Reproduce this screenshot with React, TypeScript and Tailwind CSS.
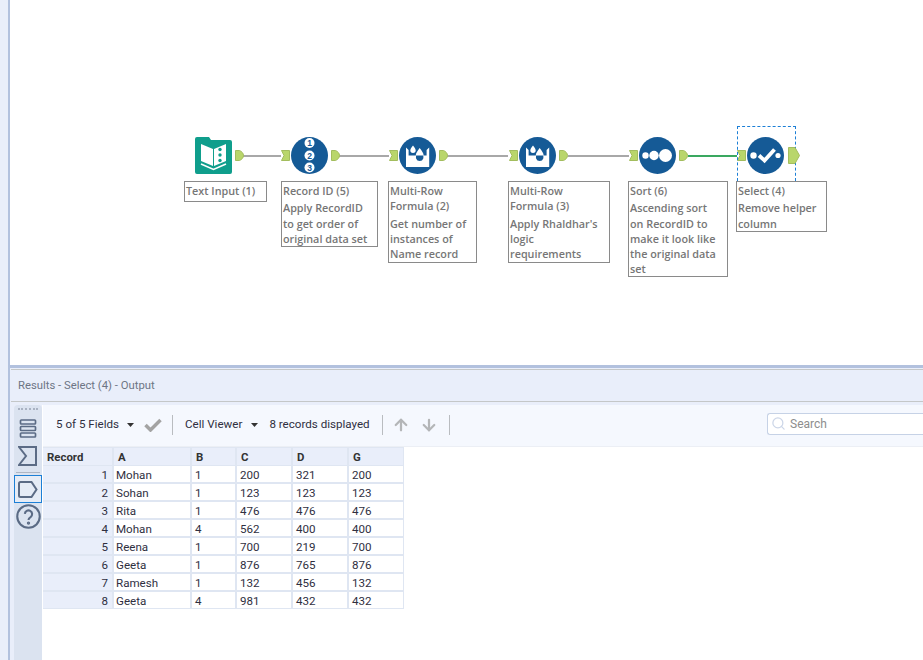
import { ArrowUp, ArrowDown, Search } from "lucide-react";

type NodeInfo = {
    x: number;
    labelX: number;
    labelW: number;
    labelH: number;
    title: string[];
    note: string[];
};

const nodes: NodeInfo[] = [
    { x: 195, labelX: 184, labelW: 83, labelH: 21, title: ["Text Input (1)"], note: [] },
    { x: 291, labelX: 281, labelW: 97, labelH: 66, title: ["Record ID (5)"], note: ["Apply RecordID", "to get order of", "original data set"] },
    { x: 399, labelX: 388, labelW: 89, labelH: 82, title: ["Multi-Row", "Formula (2)"], note: ["Get number of", "instances of", "Name record"] },
    { x: 519, labelX: 508, labelW: 102, labelH: 82, title: ["Multi-Row", "Formula (3)"], note: ["Apply Rhaldhar's", "logic", "requirements"] },
    { x: 639, labelX: 628, labelW: 100, labelH: 96, title: ["Sort (6)"], note: ["Ascending sort", "on RecordID to", "make it look like", "the original data", "set"] },
    { x: 747, labelX: 736, labelW: 91, labelH: 51, title: ["Select (4)"], note: ["Remove helper", "column"] },
];

const links = [
    { x: 243, w: 38, c: "bg-[#a8a8a8]" },
    { x: 339, w: 50, c: "bg-[#a8a8a8]" },
    { x: 447, w: 61, c: "bg-[#a8a8a8]" },
    { x: 568, w: 61, c: "bg-[#a8a8a8]" },
    { x: 688, w: 49, c: "bg-[#3aa860]" },
];

const rows = [
    ["1", "Mohan", "1", "200", "321", "200"],
    ["2", "Sohan", "1", "123", "123", "123"],
    ["3", "Rita", "1", "476", "476", "476"],
    ["4", "Mohan", "4", "562", "400", "400"],
    ["5", "Reena", "1", "700", "219", "700"],
    ["6", "Geeta", "1", "876", "765", "876"],
    ["7", "Ramesh", "1", "132", "456", "132"],
    ["8", "Geeta", "4", "981", "432", "432"],
];

const headers = ["Record", "A", "B", "C", "D", "G"];
const gridCols = "grid grid-cols-[69px_76px_43px_54px_54px_54px] gap-x-[2px]";

function InAnchor({ x }: { x: number }) {
    return (
        <svg className="absolute top-[150px]" style={{ left: x }} width="9" height="11" viewBox="0 0 9 11">
            <path d="M0.5 0.5H8.5V10.5H0.5L3 5.5Z" fill="#b9d66b" stroke="#a3bd5e" />
        </svg>
    );
}

function OutAnchor({ x }: { x: number }) {
    return (
        <svg className="absolute top-[150px]" style={{ left: x }} width="9" height="11" viewBox="0 0 9 11">
            <path d="M0.5 0.5H4.5C7 1.5 8.500 3.500 8.500 5.500S7 9.500 4.500 10.500H0.500Z" fill="#b9d66b" stroke="#a3bd5e" />
        </svg>
    );
}

function Caret({ className }: { className: string }) {
    return (
        <svg className={className} width="7" height="4" viewBox="0 0 7 4">
            <path d="M0 0H7L3.500 4Z" fill="#333" />
        </svg>
    );
}

function ToolIcon({ index }: { index: number }) {
    if (index === 0) {
        return (
            <svg width="37" height="37" viewBox="0 0 37 37">
                <path d="M0 2a2 2 0 0 1 2-2h12l2 3h19a2 2 0 0 1 2 2v30a2 2 0 0 1-2 2H2a2 2 0 0 1-2-2Z" fill="#0f9e8c" />
                <path d="M6 7l12 5v17L6 24Z" fill="#fff" />
                <path d="M19 12L31 7v17l-12 5Z" fill="#fff" />
                <path d="M6 27l12.500 5.500L31 27" fill="none" stroke="#fff" strokeWidth="1.600" />
                <circle cx="25" cy="12.500" r="1.700" fill="#0f9e8c" />
                <circle cx="25" cy="18" r="1.700" fill="#0f9e8c" />
                <circle cx="25" cy="23.500" r="1.700" fill="#0f9e8c" />
            </svg>
        );
    }
    return (
        <svg width="37" height="37" viewBox="0 0 37 37">
            <circle cx="18.5" cy="18.5" r="18.5" fill="#155a96" />
            {index === 1 && (
                <g fontFamily="'Liberation Sans', sans-serif" fontSize="8.500" fontWeight="700" textAnchor="middle" fill="#155a96">
                    <circle cx="18.5" cy="6" r="5" fill="#fff" />
                    <circle cx="18.5" cy="18.5" r="5" fill="#fff" />
                    <circle cx="18.5" cy="30.500" r="5" fill="#fff" />
                    <text x="18.5" y="9">1</text>
                    <text x="18.5" y="21.500">2</text>
                    <text x="18.5" y="33.500">3</text>
                </g>
            )}
            {(index === 2 || index === 3) && (
                <g>
                    <path d="M7 10.500l2.600 2.500v5.500h18V13l2.600-2.500V30H7Z" fill="#fff" />
                    <path d="M14 8.500c1.700 2.400 2.700 3.600 2.700 4.800a2.700 2.700 0 0 1-5.400 0c0-1.200 1-2.400 2.700-4.800Z" fill="#fff" />
                    <path d="M20.700 11c2.500 3.500 3.900 5.300 3.900 7.200a3.900 3.900 0 0 1-7.800 0c0-1.900 1.400-3.700 3.900-7.200Z" fill="#fff" />
                    <path d="M24.300 18.500c0 0.100 0.300 2.500 0 3a3.800 3.800 0 0 1-7.200 0c-0.300-0.500 0-2.900 0-3Z" fill="#155a96" />
                </g>
            )}
            {index === 4 && (
                <g fill="#fff">
                    <circle cx="6.500" cy="18.500" r="3.200" />
                    <circle cx="15" cy="18.500" r="4.700" />
                    <circle cx="26.500" cy="18.500" r="6.500" />
                </g>
            )}
            {index === 5 && (
                <g fill="#fff">
                    <circle cx="6.500" cy="18.500" r="3.200" />
                    <circle cx="31" cy="18.500" r="2.600" />
                    <path d="M12 18.500l5.500 5 10-11" fill="none" stroke="#fff" strokeWidth="3.800" />
                </g>
            )}
        </svg>
    );
}

function SideIcons() {
    return (
        <div className="w-[28px] shrink-0 bg-[#dbe3f0] flex flex-col items-center rounded-t-sm">
            <div className="mt-[3px] h-[2px] w-[20px] border-t-2 border-dotted border-[#a9b2c2]" />
            <svg className="mt-[9px]" width="18" height="19" viewBox="0 0 18 19" fill="none" stroke="#5b6b85" strokeWidth="1.700">
                <rect x="1.500" y="1" width="15" height="4" rx="0.800" />
                <rect x="1.500" y="7.500" width="15" height="4" rx="0.800" />
                <rect x="1.500" y="14" width="15" height="4" rx="0.800" />
            </svg>
            <svg className="mt-[8px]" width="20" height="20" viewBox="0 0 20 20" fill="none" stroke="#5b6b85" strokeWidth="2">
                <path d="M1 1H18V19H1L8 10Z" />
            </svg>
            <div className="mt-[6px] h-px w-[24px] bg-[#aeb6c4]" />
            <div className="mt-[2px] w-[28px] h-[28px] border border-[#1c7fd6] flex items-center justify-center bg-[#e6ecf6]">
                <svg width="20" height="17" viewBox="0 0 20 17" fill="none" stroke="#5b6b85" strokeWidth="2">
                    <path d="M2.500 1H13.500L18.500 8.500L13.500 16H2.500a1.500 1.500 0 0 1-1.500-1.500V2.500A1.500 1.500 0 0 1 2.500 1Z" />
                </svg>
            </div>
            <svg className="mt-[1px]" width="25" height="25" viewBox="0 0 24 24" fill="none" stroke="#5b6b85" strokeWidth="2">
                <circle cx="12" cy="12" r="10.800" />
                <path d="M8.500 9.500a3.500 3.500 0 1 1 5.500 3c-1.300 0.800-2 1.500-2 2.800" />
                <circle cx="12" cy="18.300" r="0.600" fill="#5b6b85" />
            </svg>
        </div>
    );
}

export default function App() {
    return (
        <div className="w-[923px] h-[660px] overflow-hidden flex bg-[#e9eefa] font-['Roboto',sans-serif] text-[11.600px] text-[#2f2f3f]">
            <div className="w-[8px] shrink-0 bg-[#e9eefa]" />
            <div className="w-[2px] shrink-0 bg-[#b2c1de]" />

            <div className="flex-1 min-w-0 flex flex-col">
                {/* workflow canvas, nodes sit on page coords so offset by the 10px strip */}
                <div className="relative h-[365px] shrink-0 bg-white">
                    <div className="absolute -left-[10px] top-0 w-[923px] h-[365px]">
                        {links.map((l) => (
                            <div key={l.x} className={`absolute top-[155px] h-[2px] ${l.c}`} style={{ left: l.x, width: l.w }} />
                        ))}
                        {nodes.map((n, i) => (
                            <div key={n.title[0] + i}>
                                {i > 0 && <InAnchor x={n.x - 10} />}
                                <div className="absolute top-[137px]" style={{ left: n.x }}>
                                    <ToolIcon index={i} />
                                </div>
                                {i < 5 && <OutAnchor x={n.x + 40} />}
                                <div
                                    className="absolute top-[181px] border border-[#8a8a8a] bg-white pl-[1px] font-['Open_Sans',sans-serif] font-semibold text-[10.800px] leading-[15.300px] text-[#767676] whitespace-nowrap"
                                    style={{ left: n.labelX, width: n.labelW, height: n.labelH }}
                                >
                                    <div className="pt-[1px]">
                                        {n.title.map((t) => (
                                            <div key={t}>{t}</div>
                                        ))}
                                    </div>
                                    {n.note.length > 0 && (
                                        <div className="mt-[2px]">
                                            {n.note.map((t) => (
                                                <div key={t}>{t}</div>
                                            ))}
                                        </div>
                                    )}
                                </div>
                            </div>
                        ))}
                        <div className="absolute left-[737px] top-[126px] w-[59px] h-[55px] border border-dashed border-b-0 border-[#1c7fd6]" />
                        <svg className="absolute left-[788px] top-[147px]" width="12" height="17" viewBox="0 0 12 17">
                            <path d="M0.500 0.500H7L11.500 8.500L7 16.500H0.500Z" fill="#b9d66b" stroke="#a3bd5e" />
                        </svg>
                    </div>
                </div>

                <div className="h-[3px] shrink-0 bg-[#b2c1de]" />

                {/* results pane */}
                <div className="flex-1 min-h-0 flex flex-col pl-px">
                    <div className="mt-px h-[33px] shrink-0 border-t border-b border-[#c4c7c8] bg-[#e9eefa] flex items-center pl-[7px] pt-px text-[#6d7585] text-[11.300px]">
                        Results - Select (4) - Output
                    </div>
                    <div className="flex-1 min-h-0 flex pl-[3px] pt-[3px]">
                        <SideIcons />
                        <div className="flex-1 min-w-0 flex flex-col bg-white pl-px">
                            <div className="h-[42px] shrink-0 bg-[#f5f8fe] flex items-center border-b border-[#eceff5] pb-[2px]">
                                <span className="ml-[13px]">5 of 5 Fields</span>
                                <Caret className="ml-[8px]" />
                                <svg className="ml-[10px]" width="18" height="14" viewBox="0 0 18 14" fill="none" stroke="#a3a3a3" strokeWidth="3.500">
                                    <path d="M1.500 7l5 5L16.500 2" />
                                </svg>
                                <div className="ml-[10px] h-[20px] w-px bg-[#b9bcc0]" />
                                <span className="ml-[12px]">Cell Viewer</span>
                                <Caret className="ml-[9px]" />
                                <span className="ml-[11px]">8 records displayed</span>
                                <div className="ml-[12px] h-[20px] w-px bg-[#b9bcc0]" />
                                <ArrowUp className="ml-[9px] w-[18px] h-[18px] text-[#b4b6b8]" strokeWidth={3} />
                                <ArrowDown className="ml-[10px] w-[18px] h-[18px] text-[#b4b6b8]" strokeWidth={3} />
                                <div className="ml-[11px] h-[20px] w-px bg-[#b9bcc0]" />
                                <div className="ml-auto mb-[2px] w-[156px] h-[22px] bg-white border border-r-0 border-[#c6d2e6] rounded-l-[3px] flex items-center pl-[3px] text-[#8d8d8d] text-[12px]">
                                    <Search className="w-[15px] h-[15px] text-[#ccd6e8]" strokeWidth={2} />
                                    <span className="ml-[4px]">Search</span>
                                </div>
                            </div>
                            <div className="w-[361px] bg-[#dfe6f2] border-r border-b border-[#dfe6f2] pt-px">
                                <div className={`${gridCols} grid-rows-[17px] font-bold text-[#333] leading-[19px]`}>
                                    {headers.map((h) => (
                                        <div key={h} className="bg-[#e9eefa] px-[4px] text-[11.400px]">
                                            {h}
                                        </div>
                                    ))}
                                </div>
                                {rows.map((row, r) => (
                                    <div key={row[0]} className={`${gridCols} grid-rows-[16px] leading-[18px] ${r === 0 ? "mt-px" : "mt-[2px]"}`}>
                                        {row.map((cell, i) =>
                                            i === 0 ? (
                                                <div key={i} className="bg-[#e9eefa] pr-[4px] text-right">
                                                    {cell}
                                                </div>
                                            ) : (
                                                <div key={i} className={`bg-white ${i === 1 ? "pl-[2px]" : "pl-[3px]"}`}>
                                                    {cell}
                                                </div>
                                            )
                                        )}
                                    </div>
                                ))}
                            </div>
                        </div>
                    </div>
                </div>
            </div>
        </div>
    );
}
